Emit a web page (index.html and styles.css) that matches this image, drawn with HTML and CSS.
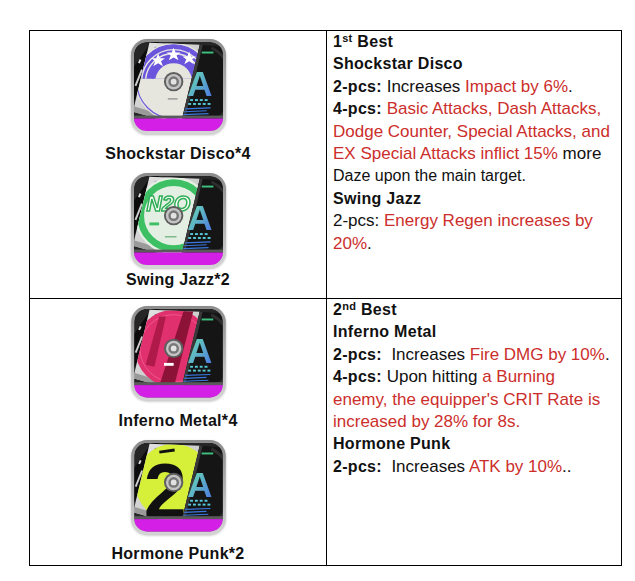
FILE: index.html
```html
<!DOCTYPE html>
<html lang="en">
<head>
<meta charset="utf-8">
<title>Drive Disc Sets</title>
<link rel="stylesheet" href="styles.css">
</head>
<body>
<svg class="defs" width="0" height="0" aria-hidden="true">
  <defs>
    <clipPath id="inner"><rect x="4" y="4" width="92" height="92" rx="13"/></clipPath>
    <clipPath id="card"><polygon points="20,5 72,7 52,90 3,76"/></clipPath>
    <clipPath id="topHalf"><rect x="0" y="0" width="100" height="42"/></clipPath>
    <linearGradient id="rim" x1="0" y1="0" x2="0" y2="1">
      <stop offset="0" stop-color="#8c8c8c"/><stop offset="1" stop-color="#d4d4d4"/>
    </linearGradient>
    <linearGradient id="cardFill" x1="0" y1="0" x2="1" y2="1">
      <stop offset="0" stop-color="#e6e6e6"/><stop offset="1" stop-color="#b8b8b8"/>
    </linearGradient>
    <linearGradient id="tealA" x1="0" y1="0" x2="1" y2="1">
      <stop offset="0" stop-color="#6ef0a8"/><stop offset="1" stop-color="#4a6ee8"/>
    </linearGradient>
    <g id="under">
      <g clip-path="url(#inner)">
        <rect x="0" y="0" width="100" height="100" fill="#262626"/>
        <polygon points="4,30 22,4 30,4 4,66" fill="#0c0c0c"/>
        <polygon points="20,5 72,7 52,90 3,76" fill="url(#cardFill)"/>
        <polygon points="3,70 52,85 52,90 3,76" fill="#9a9a9a"/>
        <rect x="9" y="22" width="2" height="4" fill="#ddd" transform="rotate(25 10 24)"/>
        <rect x="8" y="32" width="2" height="18" fill="#cfcfcf" transform="rotate(22 9 41)"/>
        <circle cx="27" cy="11" r="2" fill="#777"/>
      </g>
    </g>
    <g id="over">
      <g clip-path="url(#inner)">
        <circle cx="45" cy="45" r="10" fill="#5e5e5e"/>
        <circle cx="45" cy="45" r="8" fill="#c4c4c4"/>
        <circle cx="45" cy="45" r="5.5" fill="#777"/>
        <circle cx="45" cy="45" r="3" fill="#e2e2e2"/>
        <polygon points="72,7 98,9 98,82 52,90" fill="#151515"/>
        <polygon points="72,7 75,7 55,90 52,90" fill="#3a3a3a"/>
        <path d="M84 10 A44 44 0 0 1 92 82" fill="none" stroke="#2e2e2e" stroke-width="3"/>
        <rect x="74" y="14" width="12" height="2" fill="#3fbf7f"/>
        <text x="59" y="60" class="svgA" fill="url(#tealA)">A</text>
        <g fill="#56c8d8">
          <rect x="62" y="63" width="3" height="2"/><rect x="67" y="63" width="3" height="2"/><rect x="72" y="63" width="3" height="2"/><rect x="77" y="63" width="3" height="2"/>
          <rect x="60" y="67" width="3" height="2"/><rect x="65" y="67" width="3" height="2"/><rect x="70" y="67" width="3" height="2"/><rect x="75" y="67" width="3" height="2"/><rect x="80" y="67" width="3" height="2"/>
        </g>
        <g stroke="#3a78e0" stroke-width="1.2">
          <line x1="57" y1="73" x2="83" y2="72"/>
          <line x1="56" y1="76" x2="79" y2="75"/>
          <line x1="55" y1="79" x2="81" y2="78"/>
        </g>
        <rect x="0" y="80" width="100" height="3" fill="#5a5a5a"/>
        <rect x="0" y="83" width="100" height="17" fill="#d41fe6"/>
      </g>
      <rect x="2.5" y="2.5" width="95" height="95" rx="15" fill="none" stroke="url(#rim)" stroke-width="3"/>
    </g>
  </defs>
</svg>

<div class="sets">
  <div class="cell discs">
    <svg class="icon" viewBox="0 0 100 100" role="img" aria-label="Shockstar Disco">
      <use href="#under"/>
      <g clip-path="url(#card)">
        <circle cx="45" cy="45" r="40" fill="#e6e6de"/>
        <g clip-path="url(#topHalf)">
          <circle cx="45" cy="45" r="38" fill="#6a55dc"/>
          <circle cx="45" cy="45" r="33" fill="none" stroke="#e8e8e0" stroke-width="1.5"/>
          <circle cx="45" cy="45" r="29" fill="none" stroke="#e8e8e0" stroke-width="1.5"/>
          <circle cx="45" cy="45" r="19" fill="#e6e6de"/>
          <circle cx="45" cy="45" r="22" fill="none" stroke="#6a55dc" stroke-width="1.5"/>
        </g>
        <g fill="#fff">
          <polygon points="29,16 31,21 36,21 32,24 34,29 29,26 24,29 26,24 22,21 27,21"/>
          <polygon points="45,10 47,15 52,15 48,18 50,23 45,20 40,23 42,18 38,15 43,15"/>
          <polygon points="61,14 63,19 68,19 64,22 66,27 61,24 56,27 58,22 54,19 59,19"/>
        </g>
        <circle cx="45" cy="45" r="38" fill="none" stroke="#6a55dc" stroke-width="1.2"/>
        <rect x="39" y="62" width="10" height="1.5" fill="#999"/>
      </g>
      <use href="#over"/>
    </svg>
    <div class="label">Shockstar Disco*4</div>
    <svg class="icon gap" viewBox="0 0 100 100" role="img" aria-label="Swing Jazz">
      <use href="#under"/>
      <g clip-path="url(#card)">
        <circle cx="45" cy="45" r="40" fill="#e4efe4"/>
        <circle cx="45" cy="45" r="34" fill="none" stroke="#3cc063" stroke-width="7"/>
        <text x="17" y="40" class="svgN" fill="#fff" stroke="#2fae55" stroke-width="1.5">N2O</text>
        <rect x="20" y="52" width="10" height="3" fill="#3cc063"/>
        <rect x="36" y="66" width="12" height="1.5" fill="#7cb98a"/>
      </g>
      <use href="#over"/>
    </svg>
    <div class="label l2">Swing Jazz*2</div>
  </div>
  <div class="cell info">
    <div class="ln"><b>1<sup>st</sup> Best</b></div>
    <div class="ln"><b>Shockstar Disco</b></div>
    <div class="ln"><b>2-pcs:</b> Increases <span class="red">Impact by 6%</span>.</div>
    <div class="ln"><b>4-pcs:</b> <span class="red">Basic Attacks, Dash Attacks,</span></div>
    <div class="ln red">Dodge Counter, Special Attacks, and</div>
    <div class="ln"><span class="red">EX Special Attacks inflict 15%</span> more</div>
    <div class="ln sm">Daze upon the main target.</div>
    <div class="ln"><b>Swing Jazz</b></div>
    <div class="ln">2-pcs: <span class="red">Energy Regen increases by</span></div>
    <div class="ln"><span class="red">20%</span>.</div>
  </div>

  <div class="cell discs second">
    <svg class="icon" viewBox="0 0 100 100" role="img" aria-label="Inferno Metal">
      <use href="#under"/>
      <g clip-path="url(#card)">
        <circle cx="45" cy="45" r="40" fill="#e0306e"/>
        <circle cx="45" cy="45" r="35" fill="none" stroke="#f05a8c" stroke-width="1"/>
        <polygon points="28,90 56,4 66,4 44,90" fill="#8c1238"/>
        <polygon points="16,62 30,12 37,12 25,64" fill="#b01a4a"/>
        <rect x="35" y="60" width="10" height="3" fill="#fff"/>
      </g>
      <use href="#over"/>
    </svg>
    <div class="label">Inferno Metal*4</div>
    <svg class="icon gap" viewBox="0 0 100 100" role="img" aria-label="Hormone Punk">
      <use href="#under"/>
      <g clip-path="url(#card)">
        <circle cx="45" cy="45" r="40" fill="#d6f03a"/>
        <text x="14" y="82" class="svg2" fill="#111">2</text>
        <rect x="30" y="11" width="16" height="3" fill="#111" transform="rotate(-8 38 12)"/>
      </g>
      <use href="#over"/>
    </svg>
    <div class="label">Hormone Punk*2</div>
  </div>
  <div class="cell info">
    <div class="ln"><b>2<sup>nd</sup> Best</b></div>
    <div class="ln"><b>Inferno Metal</b></div>
    <div class="ln"><b>2-pcs:</b>&nbsp; Increases <span class="red">Fire DMG by 10%</span>.</div>
    <div class="ln"><b>4-pcs:</b> Upon hitting <span class="red">a Burning</span></div>
    <div class="ln red">enemy, the equipper's CRIT Rate is</div>
    <div class="ln red">increased by 28% for 8s.</div>
    <div class="ln"><b>Hormone Punk</b></div>
    <div class="ln"><b>2-pcs:</b>&nbsp; Increases <span class="red">ATK by 10%</span>..</div>
  </div>
</div>
</body>
</html>
```

FILE: styles.css
```css
* {
  box-sizing: border-box;
}

html,
body {
  margin: 0;
  background: #ffffff;
}

body {
  padding: 30px 0 0 29px;
  font-family: "Liberation Sans", Arial, sans-serif;
  font-size: 16px;
  color: #111111;
}

.defs {
  position: absolute;
  width: 0;
  height: 0;
  overflow: hidden;
}

.sets {
  display: grid;
  grid-template-columns: 297px 295px;
  grid-template-rows: 268px 267px;
  width: 593px;
  border-left: 1px solid #000;
  border-top: 1px solid #000;
}

.cell {
  border-right: 1px solid #000;
  border-bottom: 1px solid #000;
}

.discs {
  display: flex;
  flex-direction: column;
  align-items: center;
  padding-top: 7px;
}

.discs.second {
  padding-top: 6px;
}

.icon {
  display: block;
  width: 97px;
  height: 97px;
  filter: drop-shadow(0 1px 1px rgba(0, 0, 0, 0.25));
}

.icon.gap {
  margin-top: 7px;
}

.label {
  margin-top: 8px;
  font-weight: bold;
  font-size: 16px;
  line-height: 22px;
  letter-spacing: 0.3px;
  color: #111;
}

.label.l2 {
  margin-top: 0;
}

.info {
  padding: 0 4px 0 6px;
  font-size: 17px;
  line-height: 22.4px;
}

.ln {
  white-space: nowrap;
}

.ln b {
  font-size: 16px;
  letter-spacing: 0.3px;
}

.ln.sm {
  font-size: 16px;
}

.red {
  color: #cc2e2b;
}

sup {
  font-size: 11px;
  line-height: 0;
  vertical-align: 5px;
}

.svgA {
  font-family: "Liberation Sans", Arial, sans-serif;
  font-weight: bold;
  font-size: 36px;
}

.svgN {
  font-family: "Liberation Sans", Arial, sans-serif;
  font-weight: bold;
  font-style: italic;
  font-size: 22px;
}

.svg2 {
  font-family: "Liberation Sans", Arial, sans-serif;
  font-weight: bold;
  font-size: 80px;
}
```
